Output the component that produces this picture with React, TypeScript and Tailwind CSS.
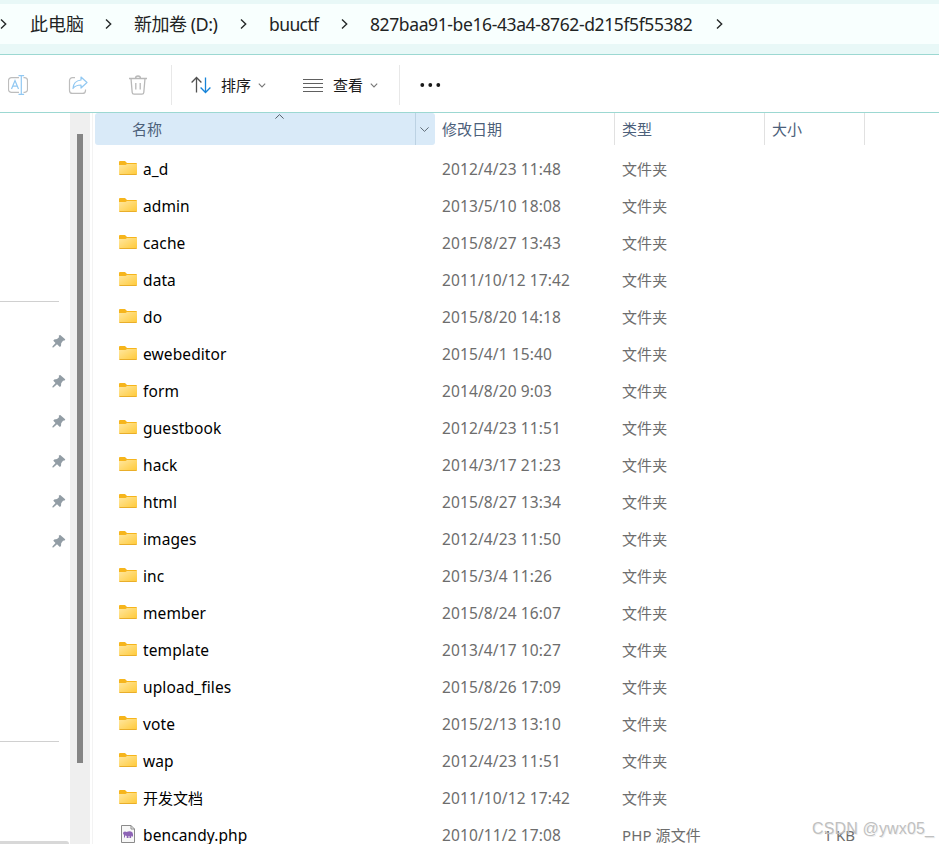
type Entry = { name: string; date: string; type: string; size?: string };

const entries: Entry[] = [
  { name: "a_d", date: "2012/4/23 11:48", type: "文件夹" },
  { name: "admin", date: "2013/5/10 18:08", type: "文件夹" },
  { name: "cache", date: "2015/8/27 13:43", type: "文件夹" },
  { name: "data", date: "2011/10/12 17:42", type: "文件夹" },
  { name: "do", date: "2015/8/20 14:18", type: "文件夹" },
  { name: "ewebeditor", date: "2015/4/1 15:40", type: "文件夹" },
  { name: "form", date: "2014/8/20 9:03", type: "文件夹" },
  { name: "guestbook", date: "2012/4/23 11:51", type: "文件夹" },
  { name: "hack", date: "2014/3/17 21:23", type: "文件夹" },
  { name: "html", date: "2015/8/27 13:34", type: "文件夹" },
  { name: "images", date: "2012/4/23 11:50", type: "文件夹" },
  { name: "inc", date: "2015/3/4 11:26", type: "文件夹" },
  { name: "member", date: "2015/8/24 16:07", type: "文件夹" },
  { name: "template", date: "2013/4/17 10:27", type: "文件夹" },
  { name: "upload_files", date: "2015/8/26 17:09", type: "文件夹" },
  { name: "vote", date: "2015/2/13 13:10", type: "文件夹" },
  { name: "wap", date: "2012/4/23 11:51", type: "文件夹" },
  { name: "开发文档", date: "2011/10/12 17:42", type: "文件夹" },
  { name: "bencandy.php", date: "2010/11/2 17:08", type: "PHP 源文件", size: "1 KB" },
];

export default function App() {
  return (
    <div className="relative flex h-[844px] w-[939px] flex-col overflow-hidden bg-white font-['Noto_Sans','Noto_Sans_CJK_SC',sans-serif] text-[15px] whitespace-nowrap">
      <AddressBar />
      <Toolbar />
      <div className="flex min-h-0 flex-1">
        <Sidebar />
        <FileList />
      </div>
      {/* watermark */}
      <div className="absolute top-[817px] left-[812px] font-['Liberation_Sans',sans-serif] text-[16px] leading-[24px] tracking-[0.15px] text-[#c0c0c0] [text-shadow:1px_1px_0_#a8a8a830]">
        CSDN @ywx05_
      </div>
    </div>
  );
}

function AddressBar() {
  return (
    <div className="h-[55px] shrink-0 border-b border-[#9cd8d2] bg-[#e8f8f7] pt-1">
      <div className="flex h-10 items-center bg-[#f8fffe] text-[18px] leading-10 text-[#1f2424]">
        <Chevron />
        <span className="ml-[23px] w-[75px]">此电脑</span>
        <Chevron />
        <span className="ml-[22px] w-[106px] tracking-[-0.5px]">新加卷 (D:)</span>
        <Chevron />
        <span className="ml-[22px] w-[72px] text-[17.5px] tracking-[-0.6px]">buuctf</span>
        <Chevron />
        <span className="ml-[22px] w-[346px] shrink-0 text-[17.5px] tracking-[-0.39px]">827baa91-be16-43a4-8762-d215f5f55382</span>
        <Chevron />
      </div>
    </div>
  );
}

function Chevron() {
  return (
    <svg className="h-3 w-[7px] shrink-0" viewBox="0 0 7 12" fill="none" stroke="#252929" strokeWidth="1.4">
      <path d="M1 1.5 5.7 6 1 10.5" />
    </svg>
  );
}

function Toolbar() {
  return (
    <div className="flex h-[58px] shrink-0 items-center border-b border-[#9cd8d2] bg-white pt-[3px] text-[#191919]">
      <svg className="ml-2 size-5" viewBox="0 0 20 20" fill="none" strokeWidth="1.2">
        <path d="M11 2.6H3.5a3 3 0 0 0-3 3v8.8a3 3 0 0 0 3 3H11M15.5 2.6h1a3 3 0 0 1 3 3v8.8a3 3 0 0 1-3 3h-1" stroke="#bdbdbd" />
        <path d="M13.3 1v18M10.5.6h5.6M10.5 19.4h5.6M3.5 14 7 5.5l3.5 8.5M4.8 11.2h4.5" stroke="#91c8f2" />
      </svg>
      <svg className="ml-10 size-5" viewBox="0 0 20 20" fill="none" strokeWidth="1.2" strokeLinejoin="round">
        <path d="M7 2.6H4.5a3 3 0 0 0-3 3v9.8a3 3 0 0 0 3 3h10a3 3 0 0 0 3-3v-.9" stroke="#bdbdbd" />
        <path d="m13 2 6 5.5-6 5.5V10c-4 0-6.200 1.200-8 3.500C5.300 8.500 8.300 5.500 13 5Z" stroke="#91c8f2" />
      </svg>
      <svg className="ml-10 size-5" viewBox="0 0 20 20" fill="none" stroke="#b8b8b8" strokeWidth="1.3">
        <path d="M1 3.500h18M7.500 3.500a2.500 2.500 0 0 1 5 0M3 3.500l1.200 14c.1 1 .8 1.600 1.800 1.600h8c1 0 1.700-.6 1.800-1.600L17 3.500M7.800 8v6.500M12.200 8v6.500" />
      </svg>
      <div className="ml-[23px] h-10 w-px bg-[#e8e8e8]" />
      <svg className="ml-[19px] size-5" viewBox="0 0 20 20" fill="none" strokeWidth="1.3">
        <path d="M5.500 17.500V2.500M.6 7.500l4.900-5 4.900 5" stroke="#505050" />
        <path d="M14.500 2.500v15M9.600 12.500l4.900 5 4.900-5" stroke="#1683d8" />
      </svg>
      <span className="ml-2.5 w-[37px]">排序</span>
      <SmallChevron />
      <svg className="ml-[37px] h-[15px] w-5" viewBox="0 0 20 15" stroke="#606060" strokeWidth="1.1">
        <path d="M0 1.500h20M0 5.500h20M0 9.500h20M0 13.500h20" />
      </svg>
      <span className="ml-2.5 w-[37px]">查看</span>
      <SmallChevron />
      <div className="ml-[21px] h-10 w-px bg-[#e8e8e8]" />
      <svg className="ml-5 h-1 w-[21px]" viewBox="0 0 21 4" fill="#191919">
        <circle cx="2.3" cy="2" r="1.9" />
        <circle cx="10.3" cy="2" r="1.9" />
        <circle cx="18.3" cy="2" r="1.9" />
      </svg>
    </div>
  );
}

function SmallChevron() {
  return (
    <svg className="h-[5px] w-2" viewBox="0 0 8 5" fill="none" stroke="#777" strokeWidth="1.1">
      <path d="m.8.700 3.200 3.200L7.200.700" />
    </svg>
  );
}

function Sidebar() {
  return (
    <div className="flex w-[93px] shrink-0 border-r border-[#f3f3f3]">
      <div className="flex w-[70px] flex-col pt-[188px]">
        <div className="h-px w-[59px] bg-[#d0d0d0]" />
        <div className="flex h-[439px] flex-col gap-[26px] pt-8 pl-[52px]">
          {[0, 1, 2, 3, 4, 5].map((i) => <Pin key={i} />)}
        </div>
        <div className="h-px w-[59px] bg-[#d0d0d0]" />
        <div className="mt-[99px] h-[3px] w-[69px] rounded-tr-sm bg-[#d8d8d8]" />
      </div>
      <div className="w-5 bg-[#efefef] pt-[21px] pl-[7px]">
        <div className="h-[629px] w-1.5 bg-[#858585]" />
      </div>
    </div>
  );
}

function Pin() {
  return (
    <svg className="size-3.5 shrink-0" viewBox="0 0 14 14" fill="#929da5">
      <path d="M8.200.9 12.300 4.500 13.300 5.400 12.600 6.500 11 6.700 9.200 9.300 9 12 7.900 13 5 10.300 1.300 13.600.2 13.300.6 12.200 3.500 9 1.300 6.700 2.200 5.400 5 5.100 7 3.200 6.800 1.500Z" />
    </svg>
  );
}

function FileList() {
  return (
    <div className="flex-1 pl-0.5">
      <div className="flex h-8 leading-8 text-[#4c607a]">
        <div className="relative w-[320px] rounded-l-[3px] bg-[#d9eaf8] pl-[37px]">
          名称
          <svg className="absolute top-px left-[180px] h-[5px] w-[9px]" viewBox="0 0 9 5" fill="none" stroke="#55606b">
            <path d="m.4 4.600 4.100-4 4.100 4" />
          </svg>
        </div>
        <div className="flex w-5 items-center rounded-r-[3px] border-l border-[#bcd2e3] bg-[#d9eaf8] pl-1">
          <svg className="h-[5px] w-[9px]" viewBox="0 0 9 5" fill="none" stroke="#5f6b76">
            <path d="m.4.400 4.100 4 4.100-4" />
          </svg>
        </div>
        <div className="w-[180px] border-r border-[#e1e1e1] pl-[7px]">修改日期</div>
        <div className="w-[150px] border-r border-[#e1e1e1] pl-[7px]">类型</div>
        <div className="w-[100px] border-r border-[#e1e1e1] pl-[7px]">大小</div>
      </div>
      <div className="pt-1.5">
        {entries.map((e) => (
          <div key={e.name} className="flex h-[37px] items-center text-[#6d6d6d]">
            <div className="flex w-[347px] items-center pl-6">
              {e.size ? <PhpIcon /> : <FolderIcon />}
              <span className={e.name === "开发文档" ? "ml-1.5 text-black" : "ml-1.5 pb-0.5 text-[15.5px] leading-5 tracking-[0.1px] text-black"}>{e.name}</span>
            </div>
            <span className="w-[180px] pb-0.5 text-[15.5px] leading-5 tracking-[0.12px]">{e.date}</span>
            <span className="w-[150px] tracking-[0.1px]">{e.type}</span>
            <span className="w-[83px] text-right">{e.size}</span>
          </div>
        ))}
      </div>
    </div>
  );
}

function FolderIcon() {
  return (
    <svg className="mb-[3px] h-3.5 w-[18px]" viewBox="0 0 18 14">
      <defs>
        <linearGradient id="folder" x1="0" y1="0" x2="1" y2="1">
          <stop offset="0" stopColor="#ffe7a0" />
          <stop offset="1" stopColor="#ffc936" />
        </linearGradient>
      </defs>
      <path d="M0 1Q0 0 1 0h5l2 2h9q1 0 1 1v5H0Z" fill="#f6b51c" />
      <path d="M0 4h6.500L8 3h10v10q0 1-1 1H1q-1 0-1-1Z" fill="url(#folder)" />
      <path d="M.5 13.500h17" stroke="#e9ae2a" />
    </svg>
  );
}

function PhpIcon() {
  return (
    <svg className="mr-0.5 mb-[3px] ml-0.5 h-[18px] w-3.5" viewBox="0 0 14 18" fill="none">
      <path d="M.5.500h9.500l3.500 3.500v13.500H.5Z" fill="#f7f7f7" stroke="#8b8b8b" />
      <path d="M10 .5V4h3.500" stroke="#8b8b8b" />
      <path d="M2 8.500Q2 6.500 4 6.500q1 0 1.500.5Q8 5.800 10 6.500q2 .5 2 3v2h-1l-.5-1-.5 2.500H8.500v-2h-1v2H5.700V11L4 10.500v2H3V10Z" fill="#8d63b5" />
    </svg>
  );
}
